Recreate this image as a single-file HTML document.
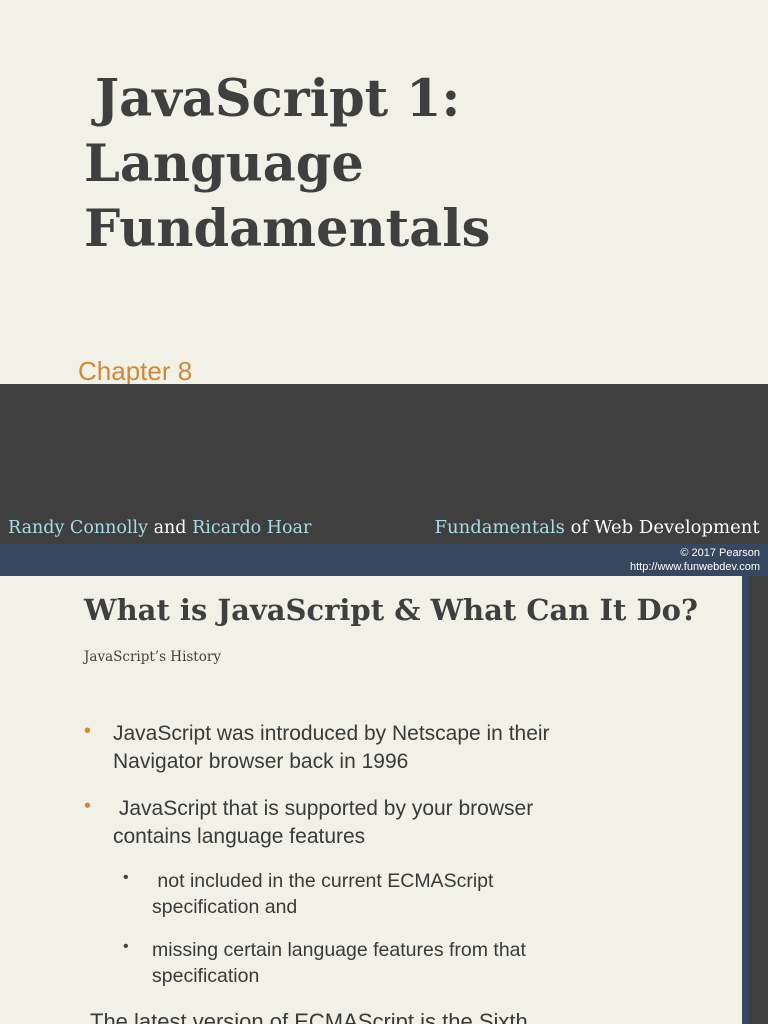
<!DOCTYPE html>
<html><head><meta charset="utf-8"><style>
*{margin:0;padding:0}
html,body{width:768px;height:1024px;overflow:hidden}
body{background:#f2f1e7;position:relative;font-family:"Liberation Sans",sans-serif}
.t{position:absolute;font-family:"DejaVu Serif",serif;font-weight:bold;color:#3f3f3f;white-space:nowrap;transform-origin:left top}
.a{position:absolute;white-space:nowrap}
.sl{font-family:"DejaVu Serif",serif;color:#fff}
.c{color:#a8dde6}
.b{position:absolute;color:#3a3a3a;font-size:21px;line-height:28px;white-space:nowrap}
</style></head><body>
<div class="t" style="left:95px;top:69px;font-size:51px">JavaScript 1:</div>
<div class="t" style="left:84px;top:134px;font-size:51px">Language</div>
<div class="t" style="left:84px;top:199px;font-size:51px">Fundamentals</div>
<div class="a" style="left:78px;top:356px;font-size:26px;color:#d0893a">Chapter 8</div>
<div style="position:absolute;left:0;top:384px;width:768px;height:160px;background:#3f3f3f"></div>
<div class="a sl" style="left:8px;top:518px;font-size:17.5px"><span class="c">Randy Connolly</span> and <span class="c">Ricardo Hoar</span></div>
<div class="a sl" style="right:8px;top:518px;font-size:17.5px;transform:scaleX(1.03);transform-origin:right top"><span class="c">Fundamentals</span> of Web Development</div>
<div style="position:absolute;left:0;top:544px;width:768px;height:32px;background:#37475f"></div>
<div class="a" style="right:8px;top:546px;font-size:11px;color:#fff;text-align:right;line-height:14px">© 2017 Pearson<br>http://www.funwebdev.com</div>
<div style="position:absolute;left:742px;top:576px;width:7px;height:448px;background:#37475f"></div>
<div style="position:absolute;left:749px;top:576px;width:19px;height:448px;background:#3f3f3f"></div>
<div class="t" style="left:84px;top:593px;font-size:29px">What is JavaScript &amp; What Can It Do?</div>
<div class="a" style="left:84px;top:649px;font-family:'DejaVu Serif',serif;font-size:13.5px;color:#404040">JavaScript’s History</div>
<div class="a" style="left:84px;top:720px;color:#d0893a;font-size:20px">•</div>
<div class="b" style="left:113px;top:720px">JavaScript was introduced by Netscape in their<br>Navigator browser back in 1996</div>
<div class="a" style="left:84px;top:795px;color:#d0893a;font-size:20px">•</div>
<div class="b" style="left:113px;top:795px">&nbsp;JavaScript that is supported by your browser<br>contains language features</div>
<div class="a" style="left:123px;top:869px;color:#404040;font-size:16px">•</div>
<div class="b" style="left:152px;top:868px;font-size:19.5px;line-height:26px">&nbsp;not included in the current ECMAScript<br>specification and</div>
<div class="a" style="left:123px;top:938px;color:#404040;font-size:16px">•</div>
<div class="b" style="left:152px;top:937px;font-size:19.5px;line-height:26px">missing certain language features from that<br>specification</div>
<div class="b" style="left:90px;top:1008px;font-size:22px">The latest version of ECMAScript is the Sixth</div>
</body></html>
